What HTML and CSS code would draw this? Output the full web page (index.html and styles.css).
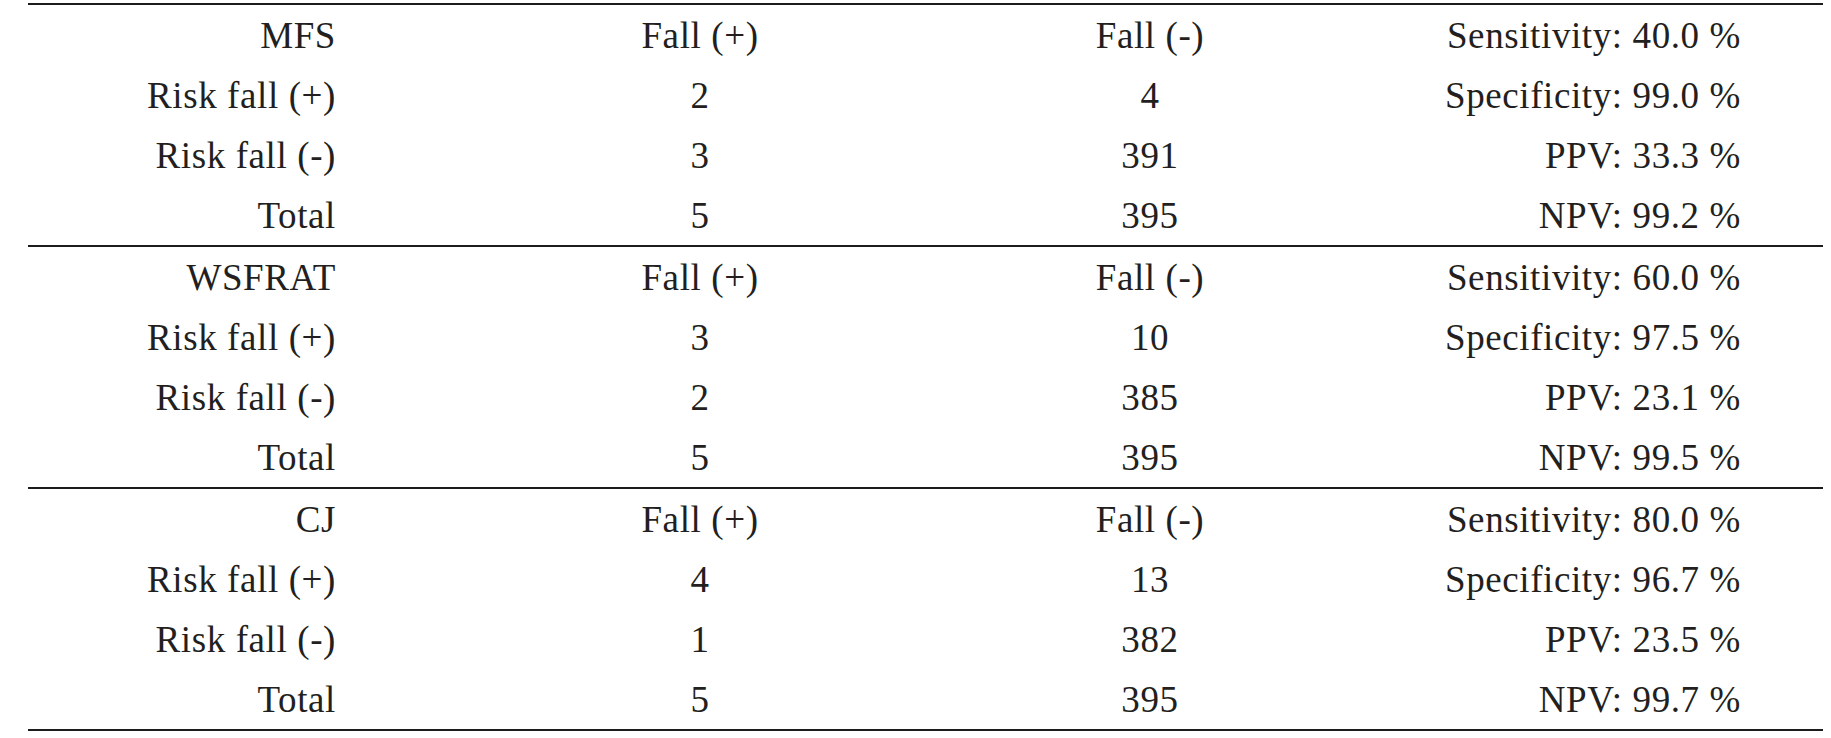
FILE: index.html
```html
<!DOCTYPE html>
<html>
<head>
<meta charset="utf-8">
<link rel="stylesheet" href="styles.css">
</head>
<body>
<div class="table">
  <div class="section">
    <div class="c1">MFS</div><div class="c2">Fall (+)</div><div class="c3">Fall (-)</div><div class="c4">Sensitivity: 40.0 %</div>
    <div class="c1">Risk fall (+)</div><div class="c2">2</div><div class="c3">4</div><div class="c4">Specificity: 99.0 %</div>
    <div class="c1">Risk fall (-)</div><div class="c2">3</div><div class="c3">391</div><div class="c4">PPV: 33.3 %</div>
    <div class="c1">Total</div><div class="c2">5</div><div class="c3">395</div><div class="c4">NPV: 99.2 %</div>
  </div>
  <div class="section">
    <div class="c1">WSFRAT</div><div class="c2">Fall (+)</div><div class="c3">Fall (-)</div><div class="c4">Sensitivity: 60.0 %</div>
    <div class="c1">Risk fall (+)</div><div class="c2">3</div><div class="c3">10</div><div class="c4">Specificity: 97.5 %</div>
    <div class="c1">Risk fall (-)</div><div class="c2">2</div><div class="c3">385</div><div class="c4">PPV: 23.1 %</div>
    <div class="c1">Total</div><div class="c2">5</div><div class="c3">395</div><div class="c4">NPV: 99.5 %</div>
  </div>
  <div class="section last">
    <div class="c1">CJ</div><div class="c2">Fall (+)</div><div class="c3">Fall (-)</div><div class="c4">Sensitivity: 80.0 %</div>
    <div class="c1">Risk fall (+)</div><div class="c2">4</div><div class="c3">13</div><div class="c4">Specificity: 96.7 %</div>
    <div class="c1">Risk fall (-)</div><div class="c2">1</div><div class="c3">382</div><div class="c4">PPV: 23.5 %</div>
    <div class="c1">Total</div><div class="c2">5</div><div class="c3">395</div><div class="c4">NPV: 99.7 %</div>
  </div>
</div>
</body>
</html>
```
FILE: styles.css
```css
html, body {
  margin: 0;
  padding: 0;
  background: #ffffff;
}
body {
  padding-top: 3px;
  font-family: "Liberation Serif", "Times New Roman", serif;
  font-size: 37px;
  letter-spacing: 0.6px;
  color: #231f20;
}
.table {
  margin-left: 28px;
  width: 1795px;
}
.section {
  display: grid;
  grid-template-columns: 452px 440px 460px 1fr;
  grid-auto-rows: 60px;
  border-top: 2px solid #1c1c1c;
}
.section.last {
  border-bottom: 2px solid #1c1c1c;
}
.section > div {
  display: flex;
  align-items: center;
  white-space: nowrap;
}
.c1 {
  justify-content: flex-end;
  padding-right: 144px;
}
.c2, .c3 {
  justify-content: center;
}
.c4 {
  justify-content: flex-end;
  padding-right: 82px;
}
```
